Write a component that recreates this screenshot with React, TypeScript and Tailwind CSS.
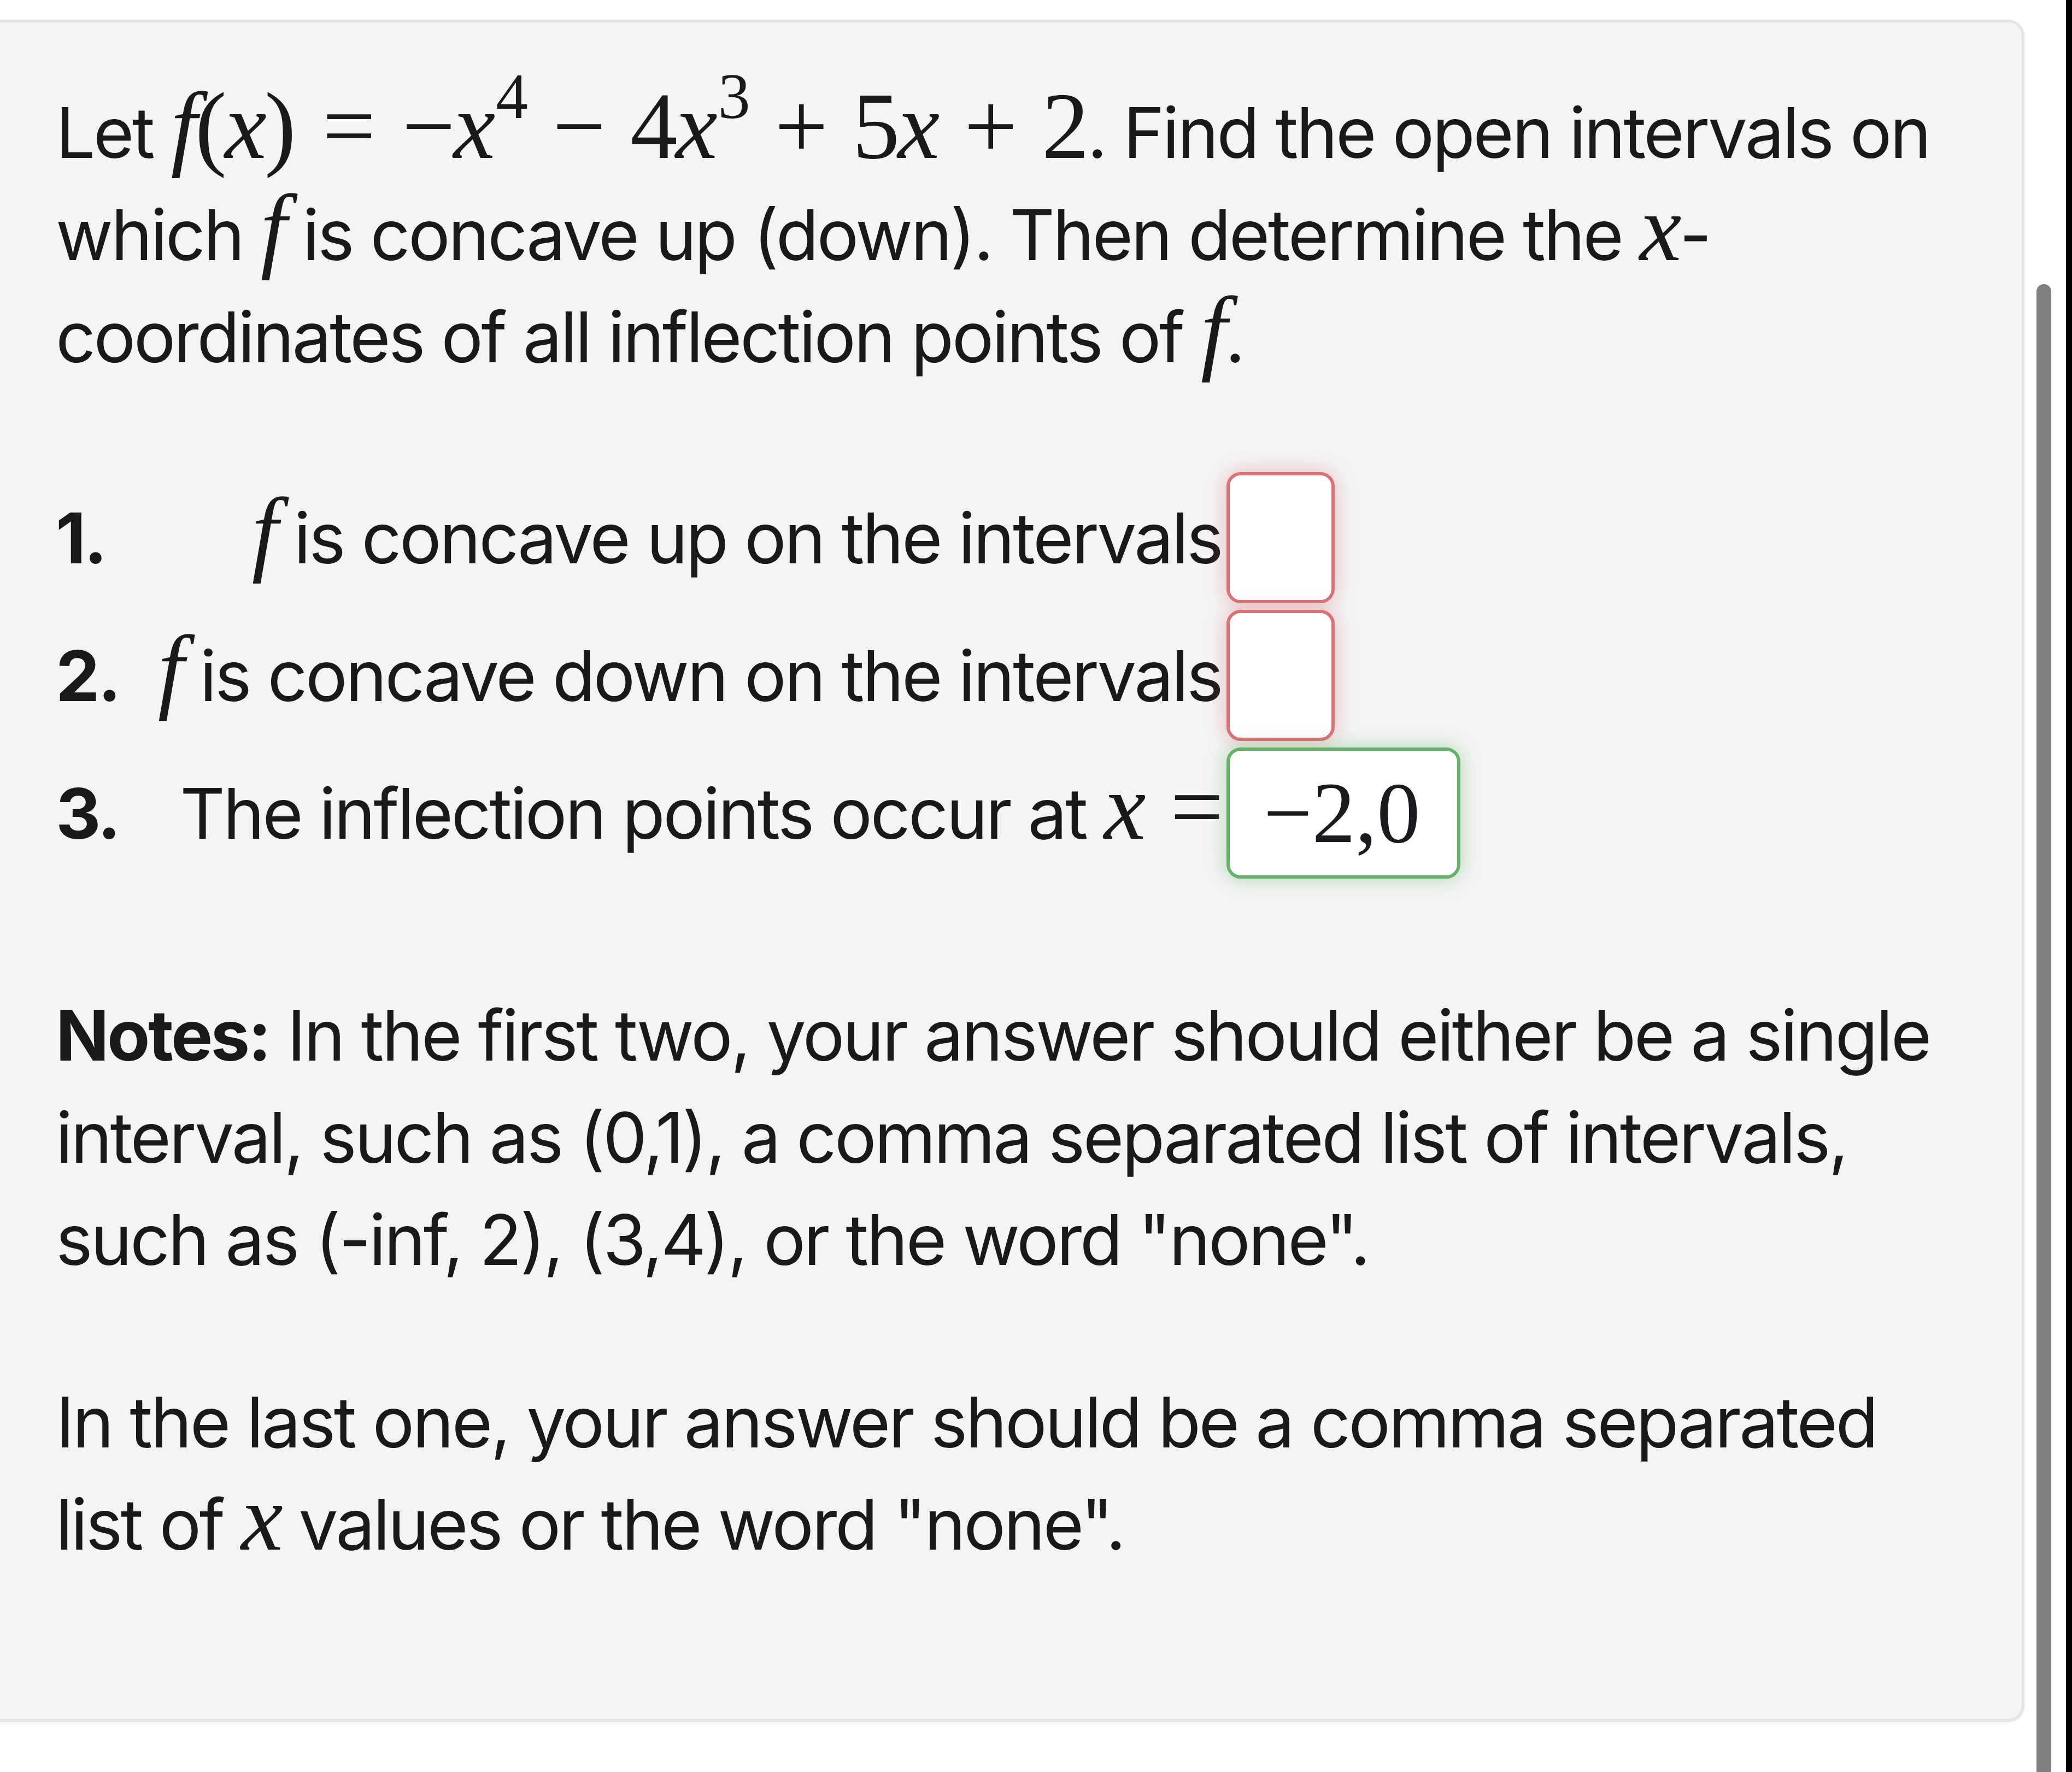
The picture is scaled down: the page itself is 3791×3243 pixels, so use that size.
const math = "font-['Liberation_Serif',serif] text-[1.35em] leading-[0]";
const sup = "font-['Liberation_Serif',serif] text-[0.92em] leading-[0] relative top-[-0.62em] ml-[0.04em]";

function V({ children }: { children: React.ReactNode }) {
  return <span className={`${math} italic`}>{children}</span>;
}

function Op({ children }: { children: React.ReactNode }) {
  return <span className={`${math} mx-[0.28em]`}>{children}</span>;
}

function AnswerBox({ value, state }: { value?: string; state: "wrong" | "right" }) {
  const tone =
    state === "wrong"
      ? "border-[#d6747a] shadow-[0_0_36px_rgba(214,116,122,0.45)] w-[198px]"
      : "border-[#66b268] shadow-[0_0_36px_rgba(102,178,104,0.45)] w-[428px]";
  return (
    <div
      className={`h-[240px] rounded-[26px] border-[6px] bg-white flex items-center justify-center ${tone}`}
    >
      {value && (
        <span className="font-['Liberation_Serif',serif] text-[158px] leading-none text-[#1b1b1f] pr-[6px] tracking-normal">
          {value}
        </span>
      )}
    </div>
  );
}

const items = [
  {
    n: "1.",
    label: (
      <>
        <V>f</V> is concave up on the intervals
      </>
    ),
    box: <AnswerBox state="wrong" />,
  },
  {
    n: "2.",
    label: (
      <>
        <V>f</V> is concave down on the intervals
      </>
    ),
    box: <AnswerBox state="wrong" />,
  },
  {
    n: "3.",
    label: (
      <>
        The inflection points occur at <V>x</V>
        <span className={`${math} ml-[0.28em]`}>=</span>
      </>
    ),
    box: <AnswerBox state="right" value="−2,0" />,
  },
];

export default function App() {
  return (
    <div className="relative w-[3791px] h-[3243px] bg-white overflow-hidden font-['Inter',sans-serif] text-[#19191c]">
      <div className="ml-[-40px] mt-[36px] w-[3744px] h-[3115px] bg-[#f4f4f4] rounded-[30px] border-[5px] border-[#e5e5e5] shadow-[0_2px_6px_rgba(0,0,0,0.06)] pl-[137px] pt-[108px] pr-[100px] text-[128px] leading-[187px] tracking-[-0.028em]">
        <p>
          Let <V>f</V>
          <span className={math}>(</span>
          <V>x</V>
          <span className={math}>)</span>
          <span className={`${math} mx-[0.3em]`}>=</span>
          <span className={math}>−</span>
          <V>x</V>
          <sup className={sup}>4</sup>
          <Op>−</Op>
          <span className={math}>4</span>
          <V>x</V>
          <sup className={sup}>3</sup>
          <Op>+</Op>
          <span className={math}>5</span>
          <V>x</V>
          <Op>+</Op>
          <span className={math}>2</span>. Find the open intervals on which <V>f</V> is concave up
          (down). Then determine the <V>x</V>-coordinates of all inflection points of <V>f</V>.
        </p>

        <div className="mt-[154px] grid grid-cols-[90px_2043px_1fr] gap-y-[12px] items-center">
          {items.map((it) => (
            <div key={it.n} className="contents">
              <span className="font-bold">{it.n}</span>
              <span className="text-right whitespace-nowrap">{it.label}</span>
              <div className="pl-[9px]">{it.box}</div>
            </div>
          ))}
        </div>

        <p className="mt-[193px]">
          <span className="font-bold">Notes:</span> In the first two, your answer should either be a
          single interval, such as (0,1), a comma separated list of intervals, such as (-inf, 2),
          (3,4), or the word "none".
        </p>
        <p className="mt-[147px]">
          In the last one, your answer should be a comma separated list of <V>x</V> values or the
          word "none".
        </p>
      </div>

      {/* scrollbar overlay */}
      <div className="absolute left-[3726px] top-[520px] bottom-0 w-[27px] bg-[#808080] rounded-t-full" />
      <div className="absolute right-0 top-0 bottom-0 w-[11px] bg-black" />
    </div>
  );
}
